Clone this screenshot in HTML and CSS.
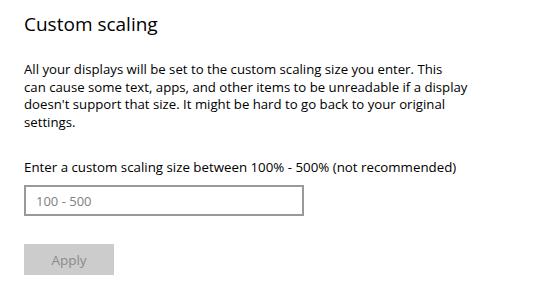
FILE: index.html
```html
<!DOCTYPE html>
<html lang="en">
<head>
  <meta charset="UTF-8">
  <title>Custom scaling</title>
  <link rel="stylesheet" href="styles.css">
</head>
<body>
  <div class="page">
    <h2 class="title">Custom scaling</h2>

    <p class="warning">
      All your displays will be set to the custom scaling size you enter. This<br>
      can cause some text, apps, and other items to be unreadable if a display<br>
      doesn't support that size. It might be hard to go back to your original<br>
      settings.
    </p>

    <label class="field-label" for="scaleInput">Enter a custom scaling size between 100% - 500% (not recommended)</label>
    <input type="text" id="scaleInput" class="scale-input" placeholder="100 - 500">

    <div class="btn-row">
      <button class="apply-btn" disabled>Apply</button>
    </div>
  </div>
</body>
</html>
```

FILE: styles.css
```css
html, body {
  margin: 0;
  padding: 0;
  background: #fff;
  color: #000;
  font-family: "Open Sans", "Noto Sans", sans-serif;
}
.page {
  padding: 10px 24px 0;
}
.title {
  margin: 0;
  font-size: 19px;
  font-weight: 400;
  line-height: 28px;
}
.warning {
  margin: 23px 0 0;
  font-size: 13.2px;
  line-height: 17.5px;
}
.field-label {
  display: block;
  margin-top: 27px;
  font-size: 13.3px;
  line-height: 18px;
}
.scale-input {
  display: block;
  box-sizing: border-box;
  width: 280px;
  height: 31px;
  margin-top: 9px;
  padding: 0 10px;
  border: 2px solid #999;
  font-family: inherit;
  font-size: 13px;
  color: #000;
  outline: none;
}
.scale-input::placeholder {
  color: #808080;
}
.btn-row {
  margin-top: 28px;
}
.apply-btn {
  width: 90px;
  height: 31px;
  background: #ccc;
  color: #8a8a8a;
  border: none;
  font-family: inherit;
  font-size: 13.5px;
  padding: 0;
}
```
